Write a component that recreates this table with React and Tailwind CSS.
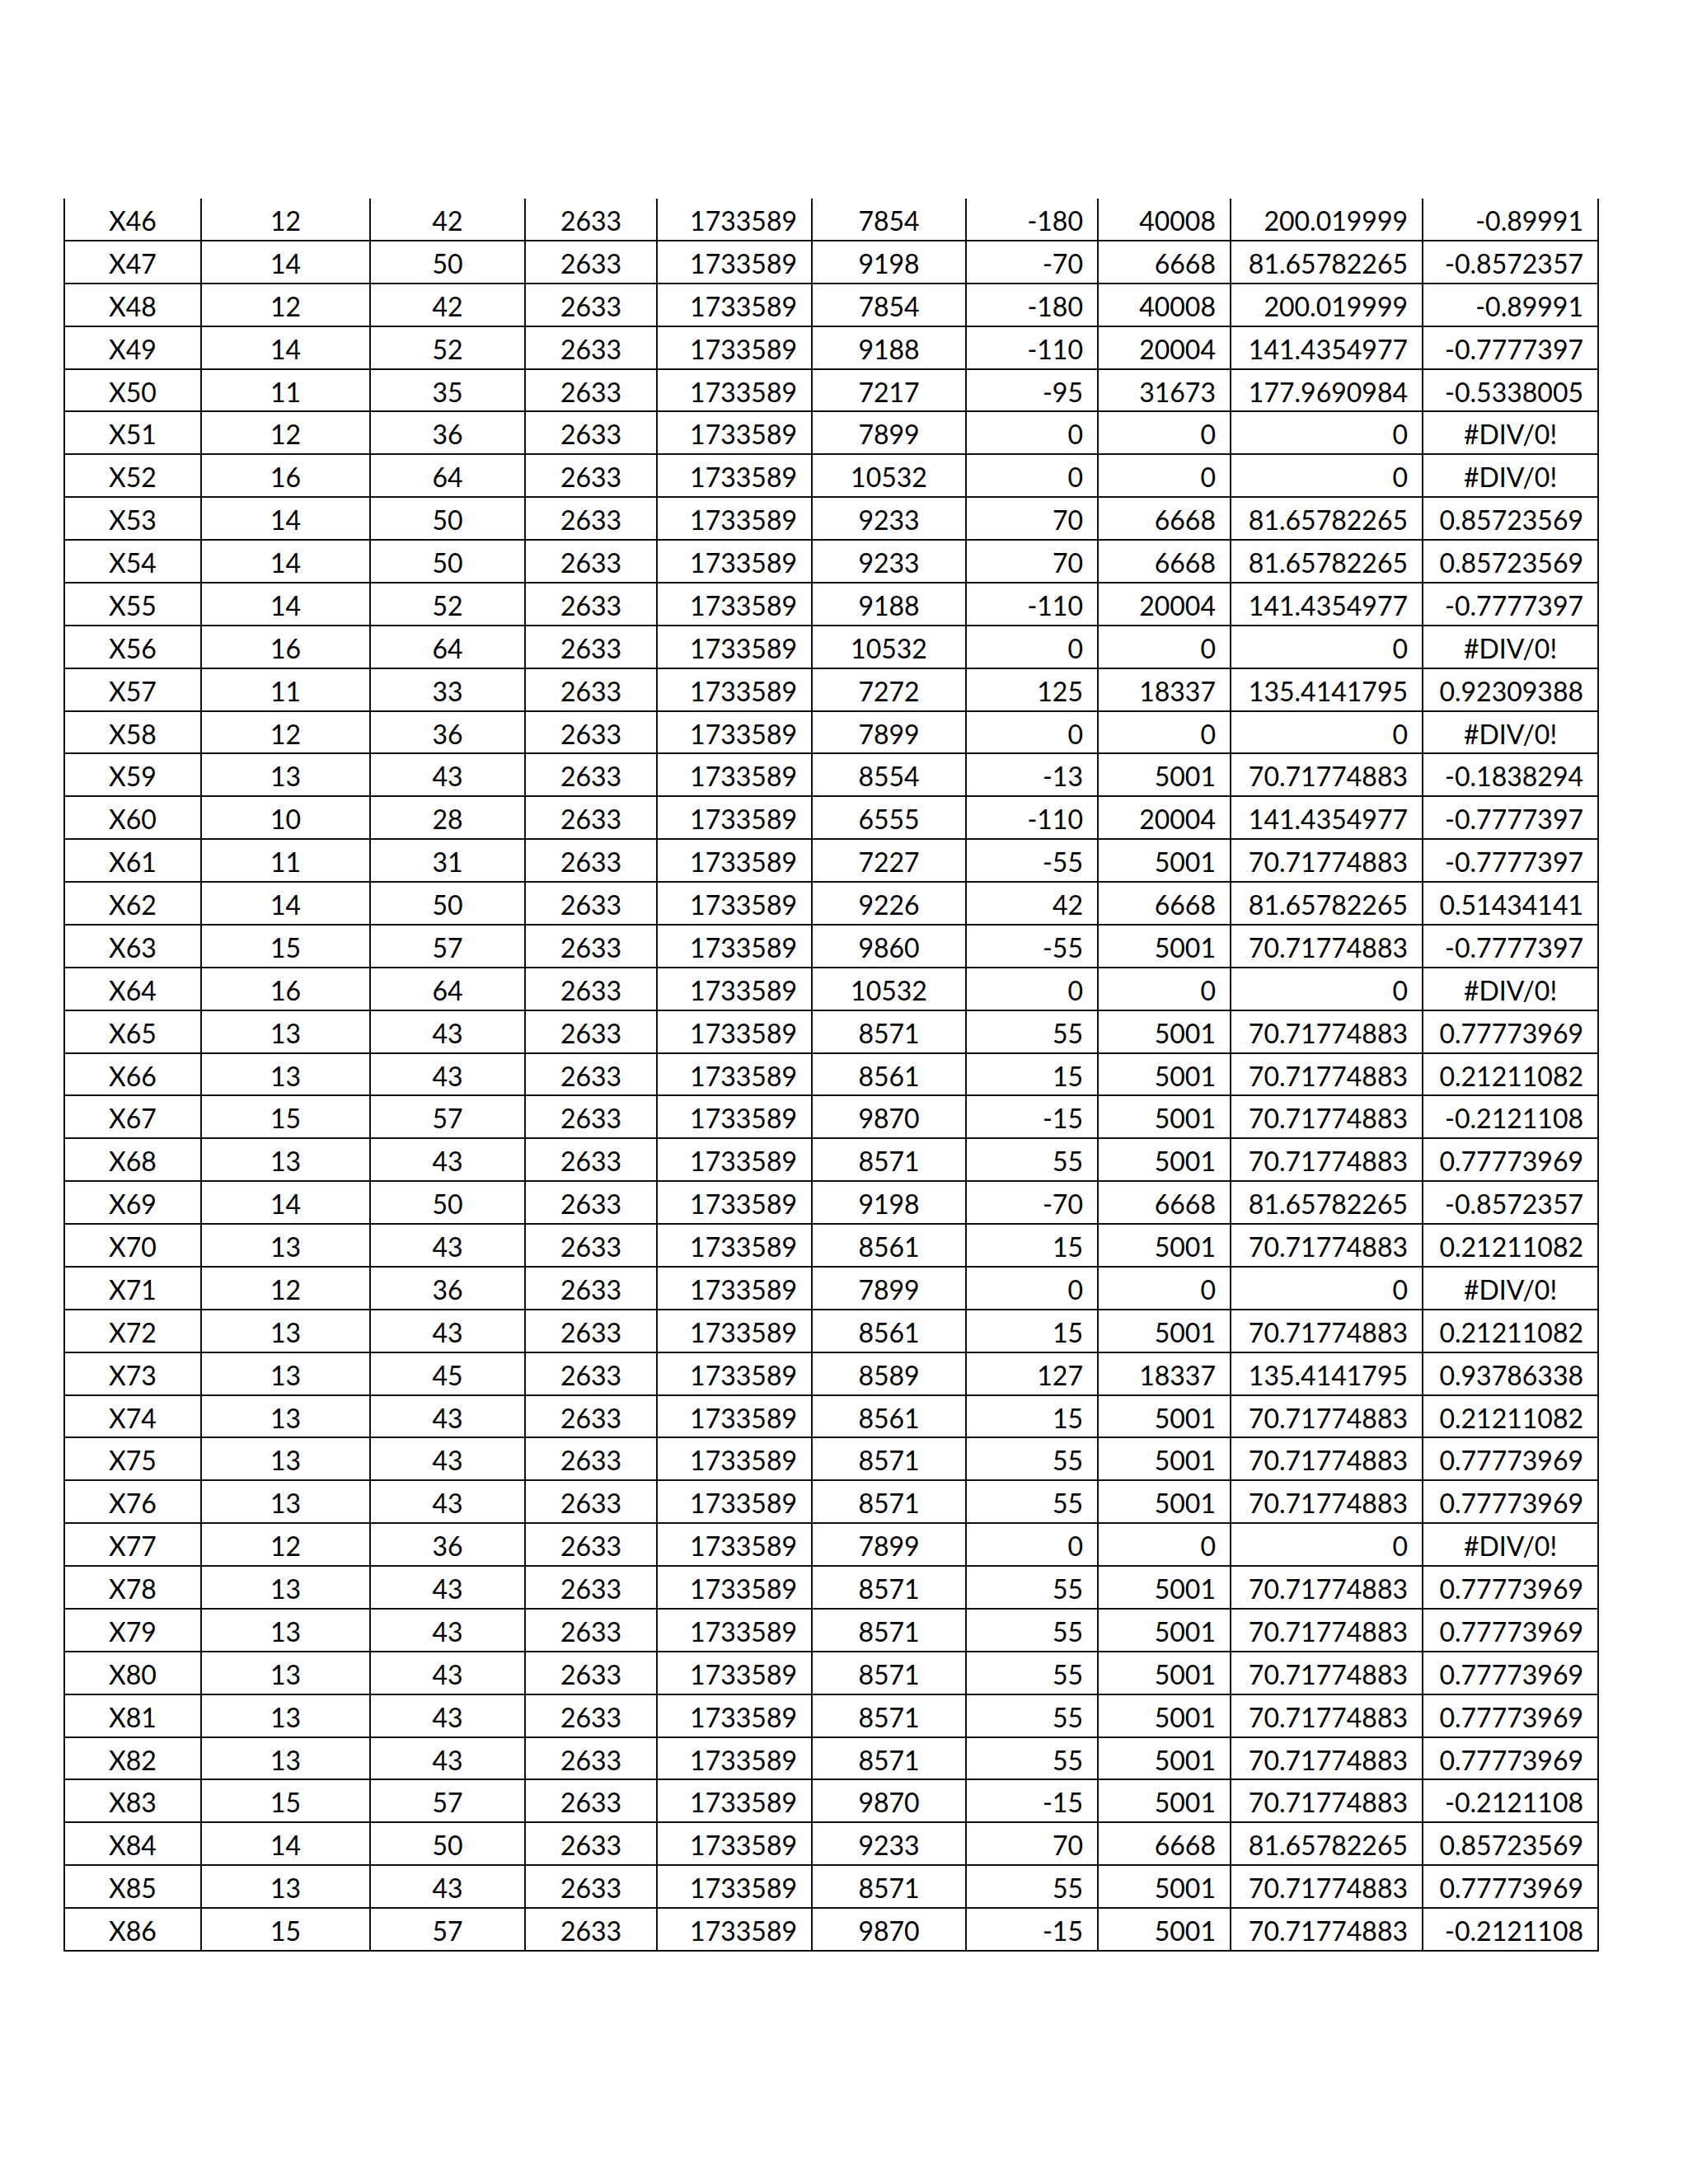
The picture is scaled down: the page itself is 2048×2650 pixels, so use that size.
import React from "react";

const rows = `X46 12 42 7854 -180 40008 200.019999 -0.89991
X47 14 50 9198 -70 6668 81.65782265 -0.8572357
X48 12 42 7854 -180 40008 200.019999 -0.89991
X49 14 52 9188 -110 20004 141.4354977 -0.7777397
X50 11 35 7217 -95 31673 177.9690984 -0.5338005
X51 12 36 7899 0 0 0 #DIV/0!
X52 16 64 10532 0 0 0 #DIV/0!
X53 14 50 9233 70 6668 81.65782265 0.85723569
X54 14 50 9233 70 6668 81.65782265 0.85723569
X55 14 52 9188 -110 20004 141.4354977 -0.7777397
X56 16 64 10532 0 0 0 #DIV/0!
X57 11 33 7272 125 18337 135.4141795 0.92309388
X58 12 36 7899 0 0 0 #DIV/0!
X59 13 43 8554 -13 5001 70.71774883 -0.1838294
X60 10 28 6555 -110 20004 141.4354977 -0.7777397
X61 11 31 7227 -55 5001 70.71774883 -0.7777397
X62 14 50 9226 42 6668 81.65782265 0.51434141
X63 15 57 9860 -55 5001 70.71774883 -0.7777397
X64 16 64 10532 0 0 0 #DIV/0!
X65 13 43 8571 55 5001 70.71774883 0.77773969
X66 13 43 8561 15 5001 70.71774883 0.21211082
X67 15 57 9870 -15 5001 70.71774883 -0.2121108
X68 13 43 8571 55 5001 70.71774883 0.77773969
X69 14 50 9198 -70 6668 81.65782265 -0.8572357
X70 13 43 8561 15 5001 70.71774883 0.21211082
X71 12 36 7899 0 0 0 #DIV/0!
X72 13 43 8561 15 5001 70.71774883 0.21211082
X73 13 45 8589 127 18337 135.4141795 0.93786338
X74 13 43 8561 15 5001 70.71774883 0.21211082
X75 13 43 8571 55 5001 70.71774883 0.77773969
X76 13 43 8571 55 5001 70.71774883 0.77773969
X77 12 36 7899 0 0 0 #DIV/0!
X78 13 43 8571 55 5001 70.71774883 0.77773969
X79 13 43 8571 55 5001 70.71774883 0.77773969
X80 13 43 8571 55 5001 70.71774883 0.77773969
X81 13 43 8571 55 5001 70.71774883 0.77773969
X82 13 43 8571 55 5001 70.71774883 0.77773969
X83 15 57 9870 -15 5001 70.71774883 -0.2121108
X84 14 50 9233 70 6668 81.65782265 0.85723569
X85 13 43 8571 55 5001 70.71774883 0.77773969
X86 15 57 9870 -15 5001 70.71774883 -0.2121108`
  .split("\n")
  .map((line) => {
    const [id, a, b, c, d, e, f, g] = line.split(" ");
    return [id, a, b, "2633", "1733589", c, d, e, f, g];
  });

// widths of each cell box, right border included (first one also has the left border)
const cols = [
  "w-[168px] border-l-2 text-center",
  "w-[205px] text-center",
  "w-[188px] text-center",
  "w-[160px] text-center",
  "w-[188px] text-right pr-[17px]",
  "w-[187px] text-center",
  "w-[160px] text-right pr-[17px]",
  "w-[161px] text-right pr-[17px]",
  "w-[233px] text-right pr-[17px]",
  "w-[213px] text-right pr-[17px]",
];

function Cell({ value, col }) {
  let cls = cols[col];
  if (value === "#DIV/0!") cls = cls.replace("text-right pr-[17px]", "text-center");
  return (
    <div
      className={`${cls} shrink-0 h-full border-r-2 border-b-2 border-[#111] pt-[5px] leading-[44.875px] whitespace-nowrap`}
    >
      {value}
    </div>
  );
}

export default function App() {
  return (
    <div
      className="w-[2048px] h-[2650px] bg-white text-black text-[32px] pt-[241px] pl-[77px]"
      style={{ fontFamily: "Lato, 'Open Sans', sans-serif" }}
    >
      {rows.map((row, i) => (
        <div key={i} className="flex h-[51.875px]">
          {row.map((v, j) => (
            <Cell key={j} value={v} col={j} />
          ))}
        </div>
      ))}
    </div>
  );
}
